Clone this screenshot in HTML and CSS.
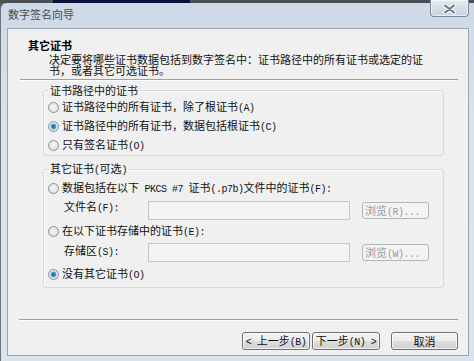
FILE: index.html
```html
<!DOCTYPE html>
<html lang="zh-CN">
<head>
<meta charset="utf-8">
<title>数字签名向导</title>
<link rel="stylesheet" href="styles.css">
</head>
<body>
<div class="backdrop"><span class="navy"></span></div>
<div class="window">
  <div class="titlebar">
    <span class="title">数字签名向导</span>
    <button class="close" aria-label="关闭">
      <svg width="13" height="10" viewBox="0 0 13 10">
        <path d="M2 1.5 L11 8.5 M11 1.5 L2 8.5" stroke="#f6f8fa" stroke-width="4.2" stroke-linecap="round" fill="none"/>
        <path d="M2 1.5 L11 8.5 M11 1.5 L2 8.5" stroke="#6a7582" stroke-width="2" stroke-linecap="round" fill="none"/>
      </svg>
    </button>
  </div>
  <div class="client">
    <div class="header">
      <div class="h-title">其它证书</div>
      <p class="h-desc">决定要将哪些证书数据包括到数字签名中：证书路径中的所有证书或选定的证书，或者其它可选证书。</p>
    </div>
    <div class="sep sep-top"></div>

    <fieldset class="group g1">
      <legend>证书路径中的证书</legend>
      <label class="row"><input type="radio" name="path"><span>证书路径中的所有证书，除了根证书<span class="en">(A)</span></span></label>
      <label class="row"><input type="radio" name="path" checked><span>证书路径中的所有证书，数据包括根证书<span class="en">(C)</span></span></label>
      <label class="row"><input type="radio" name="path"><span>只有签名证书<span class="en">(O)</span></span></label>
    </fieldset>

    <fieldset class="group g2">
      <legend>其它证书<span class="en">(</span>可选<span class="en">)</span></legend>
      <label class="row"><input type="radio" name="other"><span>数据包括在以下<span class="en"> PKCS #7 </span>证书<span class="en">(.p7b)</span>文件中的证书<span class="en">(F):</span></span></label>
      <div class="field-row fr1">
        <span class="flabel">文件名<span class="en">(F):</span></span>
        <input class="tbox" type="text" disabled>
        <button class="browse" disabled>浏览<span class="en">(R)...</span></button>
      </div>
      <label class="row r2"><input type="radio" name="other"><span>在以下证书存储中的证书<span class="en">(E):</span></span></label>
      <div class="field-row fr2">
        <span class="flabel">存储区<span class="en">(S):</span></span>
        <input class="tbox" type="text" disabled>
        <button class="browse" disabled>浏览<span class="en">(W)...</span></button>
      </div>
      <label class="row r3"><input type="radio" name="other" checked><span>没有其它证书<span class="en">(O)</span></span></label>
    </fieldset>

    <div class="sep sep-bottom"></div>
    <div class="buttons">
      <button class="btn"><span class="en">&lt; </span>上一步<span class="en">(B)</span></button>
      <button class="btn next">下一步<span class="en">(N) &gt;</span></button>
      <button class="btn cancel">取消</button>
    </div>
  </div>
</div>
</body>
</html>
```
FILE: styles.css
```css
* { box-sizing: border-box; }
html, body { margin: 0; padding: 0; }
body {
  width: 474px;
  height: 361px;
  overflow: hidden;
  background: #555b62;
  font-family: "Noto Sans CJK SC", sans-serif;
  font-size: 11px;
  color: #111;
}
.en {
  font-family: "Liberation Mono", "Noto Sans CJK SC", monospace;
  font-size: 10px;
  letter-spacing: -0.5px;
}
.backdrop {
  height: 3px;
  background: #4a4e55;
  display: flex;
}
.backdrop .navy {
  margin-left: 53px;
  width: 137px;
  background: #0b1038;
}
.window {
  position: relative;
  height: 358px;
  background: linear-gradient(#cdd9e6, #d8e2ec 30%, #dbe4ee);
  border-left: 1px solid #6b727a;
  border-radius: 6px 0 0 0;
  padding: 0 5px 0 6px;
  display: flex;
  flex-direction: column;
}
.titlebar {
  height: 25px;
  padding: 5px 0 0 1px;
  line-height: 12px;
}
.title {
  color: #4a4a4a;
  font-size: 11px;
}
.close {
  position: absolute;
  top: -3px;
  right: 5px;
  width: 39px;
  height: 17px;
  padding: 0;
  border: 1px solid #7f8a97;
  border-top: none;
  border-radius: 0 0 4px 4px;
  background: linear-gradient(#e6edf4, #d3dde8 50%, #c9d4e0);
  box-shadow: inset 0 0 0 1px rgba(255,255,255,0.55);
  display: flex;
  align-items: center;
  justify-content: center;
}
.close svg { display: block; margin-top: 1px; }
.client {
  height: 328px;
  border: 1px solid #9ba6b2;
  background: #f0f0f0;
}
.header {
  padding: 9px 0 0 20px;
}
.h-title {
  font-weight: bold;
  line-height: 14px;
  color: #000;
}
.h-desc {
  margin: 2px 0 0 21px;
  width: 378px;
  line-height: 11px;
  color: #111;
}
.sep {
  height: 2px;
  border-top: 1px solid #a0a0a0;
  border-bottom: 1px solid #ffffff;
}
.sep-top { margin: 3px 10px 0 12px; }
.sep-bottom { margin: 31px 10px 0 11px; }

.group {
  margin: 0 0 0 35px;
  width: 401px;
  padding: 0;
  border: 1px solid #d3d8dd;
  border-radius: 3px;
  box-shadow: inset 1px 1px 0 #fbfbfb;
  min-width: 0;
}
.group legend {
  margin-left: 4px;
  padding: 0 2px;
  line-height: 12px;
  color: #111;
}
.g1 { margin-top: 3px; padding-top: 2px; }
.g2 { margin-top: 6px; padding-top: 2px; padding-bottom: 3px; }

.row {
  display: flex;
  align-items: center;
  height: 19px;
  padding-left: 4px;
  line-height: 12px;
}
.row input[type="radio"] {
  appearance: none;
  -webkit-appearance: none;
  width: 11px;
  height: 11px;
  margin: 0 3px 0 0;
  border: 1px solid #8e9296;
  border-radius: 50%;
  background: radial-gradient(circle at 50% 45%, #f6f6f6 0, #e6e6e6 55%, #d2d2d2 100%);
  flex: none;
}
.row input[type="radio"]:checked {
  background:
    radial-gradient(circle at 50% 50%, #1d5f86 0, #2a8dbd 1.6px, #5cc0e6 2.8px, rgba(92,192,230,0) 3.3px),
    radial-gradient(circle at 50% 45%, #f6f6f6 0, #e6e6e6 55%, #d2d2d2 100%);
}
.r2 { margin-top: 2px; }
.r3 { margin-top: 3px; }

.field-row {
  display: flex;
  align-items: flex-start;
  height: 19px;
  padding-left: 20px;
}
.fr1 { margin-top: 3px; }
.fr2 { margin-top: 2px; }
.flabel {
  width: 84px;
  line-height: 13px;
  margin-top: 0;
  flex: none;
}
.fr1 .flabel { margin-top: -1px; }
.fr2 .flabel { margin-top: 1px; }
.tbox {
  width: 202px;
  height: 19px;
  margin: 0;
  padding: 0;
  border: 1px solid #c4c6c8;
  background: #f3f3f3;
  flex: none;
}
.browse {
  width: 67px;
  height: 17px;
  margin: 1px 0 0 12px;
  padding: 0 6px 0 0;
  border: 1px solid #b3b6b9;
  border-radius: 3px;
  background: #f4f4f4;
  color: #9a9a9a;
  font-family: "Noto Sans CJK SC", sans-serif;
  font-size: 11px;
  line-height: 14px;
  flex: none;
}

.buttons {
  display: flex;
  justify-content: flex-end;
  margin-top: 11px;
  padding-right: 10px;
}
.btn {
  width: 68px;
  height: 18px;
  padding: 0;
  border: 1px solid #707070;
  border-radius: 3px;
  background: linear-gradient(#f4f4f4 0%, #ececec 48%, #dedede 50%, #d0d0d0 100%);
  box-shadow: inset 0 0 0 1px rgba(255,255,255,0.7);
  color: #111;
  font-family: "Noto Sans CJK SC", sans-serif;
  font-size: 11px;
  line-height: 14px;
}
.next { margin-left: 2px; }
.cancel { margin-left: 11px; width: 67px; }
```
